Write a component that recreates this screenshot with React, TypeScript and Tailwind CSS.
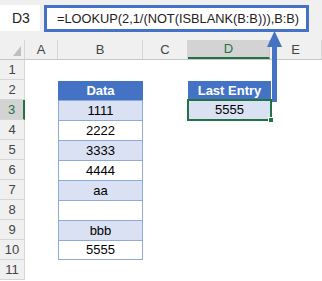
import React from 'react';

// Sheet geometry, px
const COLS = [
  { key: 'A', w: 'w-[33px]' },
  { key: 'B', w: 'w-[85px]' },
  { key: 'C', w: 'w-[45px]' },
  { key: 'D', w: 'w-[82px]' },
  { key: 'E', w: 'w-[52px]' },
];

const dataRows: { row: number; value: string; shaded: boolean }[] = [
  { row: 3, value: '1111', shaded: true },
  { row: 4, value: '2222', shaded: false },
  { row: 5, value: '3333', shaded: true },
  { row: 6, value: '4444', shaded: false },
  { row: 7, value: 'aa', shaded: true },
  { row: 8, value: '', shaded: false },
  { row: 9, value: 'bbb', shaded: true },
  { row: 10, value: '5555', shaded: false },
];

const RowHeader: React.FC<{ n: number; active?: boolean }> = ({ n, active }) => (
  <div
    className={`w-[25px] h-[20px] shrink-0 flex items-center justify-center border-b border-[#d6d6d6] text-[13px] ${
      active
        ? 'bg-[#d3d3d3] text-[#217346] border-r-2 border-r-[#217346]'
        : 'bg-[#f0f0f0] text-[#444] border-r border-r-[#d6d6d6]'
    }`}
  >
    {n}
  </div>
);

const BCell: React.FC<{ value: string; shaded: boolean; last?: boolean }> = ({ value, shaded, last }) => (
  <div
    className={`w-[85px] h-[20px] shrink-0 flex items-center justify-center border-x border-t border-[#8ea9db] text-[13px] text-black ${
      shaded ? 'bg-[#d9e1f2]' : 'bg-white'
    } ${last ? 'border-b' : ''}`}
  >
    {value}
  </div>
);

const App: React.FC = () => {
  return (
    <div className="relative w-[322px] h-[281px] overflow-hidden bg-white font-['Liberation_Sans',Arial,sans-serif]">
      {/* Formula bar */}
      <div className="h-[40px] bg-[#f0f0f0] flex items-start pt-[5px]">
        <div className="w-[40px] h-[26px] bg-white flex items-center pl-[12px] text-[14px] text-[#222]">D3</div>
        <div className="ml-[4px] w-[265px] h-[27px] bg-white border-[3px] border-[#4472c4] flex items-center pl-[10px] text-[12.8px] text-[#222] whitespace-nowrap">
          =LOOKUP(2,1/(NOT(ISBLANK(B:B))),B:B)
        </div>
      </div>

      {/* Column headers */}
      <div className="flex h-[20px] bg-[#f0f0f0] border-b border-[#c8c8c8]">
        <div className="w-[25px] h-full shrink-0 border-r border-[#d6d6d6] flex items-end justify-end pr-[3px] pb-[3px]">
          <div className="w-0 h-0 border-l-[8px] border-l-transparent border-b-[10px] border-b-[#bfbfbf]" />
        </div>
        {COLS.map((c) =>
          c.key === 'D' ? (
            <div
              key={c.key}
              className={`${c.w} h-full shrink-0 bg-[#d3d3d3] border-b-2 border-[#217346] border-r border-r-[#c8c8c8] flex items-center justify-center text-[13px] text-[#217346]`}
            >
              {c.key}
            </div>
          ) : (
            <div
              key={c.key}
              className={`${c.w} h-full shrink-0 border-r border-[#d6d6d6] flex items-center justify-center text-[13px] text-[#444]`}
            >
              {c.key}
            </div>
          )
        )}
      </div>

      {/* Row 1 */}
      <div className="flex">
        <RowHeader n={1} />
      </div>

      {/* Row 2: headers */}
      <div className="flex">
        <RowHeader n={2} />
        <div className="w-[33px] shrink-0" />
        <div className="w-[85px] shrink-0 mt-[1px] h-[19px] bg-[#4472c4] flex items-center justify-center text-[13px] font-bold text-white">
          Data
        </div>
        <div className="w-[45px] shrink-0" />
        <div className="w-[83px] h-[19px] shrink-0 mt-[1px] bg-[#4472c4] flex items-center justify-center text-[13px] font-bold text-white">
          Last Entry
        </div>
      </div>

      {/* Rows 3-10 */}
      {dataRows.map((r) => (
        <div key={r.row} className="flex">
          <RowHeader n={r.row} active={r.row === 3} />
          <div className="w-[33px] shrink-0" />
          <BCell value={r.value} shaded={r.shaded} last={r.row === 10} />
          <div className="w-[45px] shrink-0" />
          {r.row === 3 && (
            <div className="relative w-[83px] h-[20px] shrink-0 bg-[#d9e1f2] flex items-center justify-center text-[13px] text-black">
              5555
              <div className="absolute -inset-[1px] border-2 border-[#217346]" />
              <div className="absolute -right-[3px] -bottom-[3px] w-[6px] h-[6px] bg-[#217346] border border-white" />
            </div>
          )}
        </div>
      ))}

      {/* Row 11 */}
      <div className="flex">
        <RowHeader n={11} />
      </div>

      {/* Arrow from formula to result */}
      <svg className="absolute left-[264px] top-[30px]" width="20" height="72" viewBox="0 0 20 72">
        <rect x="8" y="14" width="5" height="58" fill="#4472c4" />
        <polygon points="10.5,1 3,17 18,17" fill="#4472c4" />
      </svg>
    </div>
  );
};

export default App;
